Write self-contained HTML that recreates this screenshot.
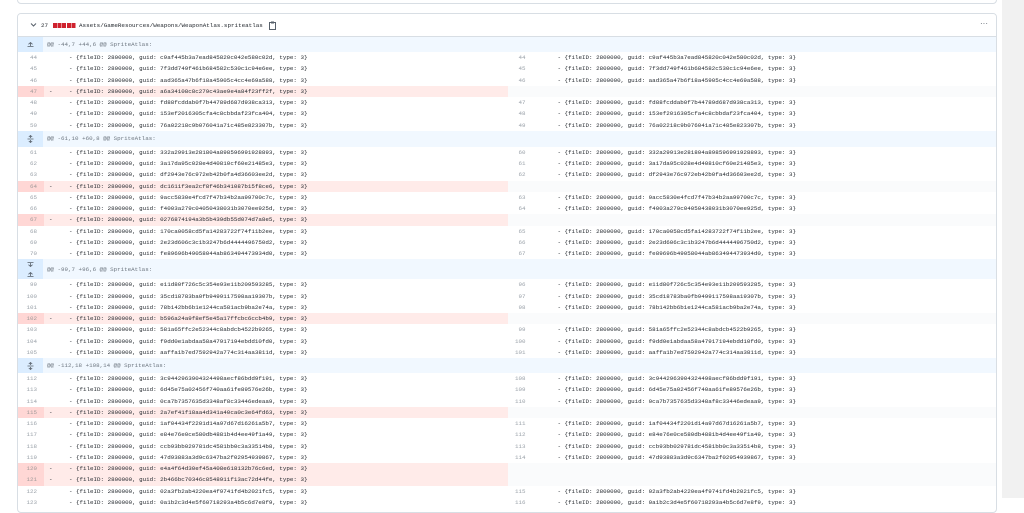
<!DOCTYPE html>
<html><head><meta charset="utf-8"><style>
*{margin:0;padding:0;box-sizing:border-box}
body{width:1024px;height:498px;overflow:hidden;background:#fff;font-family:"Liberation Mono",monospace;position:relative}
.strip{position:absolute;left:1002px;top:0;width:22px;height:498px;background:#f1f1f1}
.prev{position:absolute;left:17px;top:-10px;width:980px;height:14px;border:1px solid #d8dee4;border-radius:4px}
.box{position:absolute;left:17px;top:13px;width:980px;height:500px;border:1px solid #d8dee4;border-radius:4px;overflow:hidden}
.hd{height:23px;border-bottom:1px solid #d8dee4;background:#fff;position:relative;font-size:5.9px;color:#24292f}
.hd span{position:absolute;top:8px}
.row{display:flex;height:11.25px;font-size:5.85px;line-height:11.25px;color:#24292f;white-space:pre}
.half{display:flex;width:490px;position:relative}
.r{width:489px}
.n{width:26px;text-align:right;padding-right:7px;color:#9aa1a9}
.m{width:25px;padding-left:5px}
.del{background:#ffebe9}
.del .n{background:#ffd7d5;color:#a09a9a}
.emp{background:#fafbfc}
.hk{display:flex;background:#f1f8ff;font-size:5.85px;color:#6e7781;white-space:pre}
.hk .ic{width:25px;background:#dbedff;display:flex;align-items:center;justify-content:center;flex-direction:column}
.hk .t{padding-left:4px;display:flex;align-items:center}
</style></head><body>
<div class="strip"></div>
<div class="prev"></div>
<div class="box">
<div class="hd">
<svg style="position:absolute;left:12px;top:8px" width="7" height="6" viewBox="0 0 7 6"><path d="M1 1.5 L3.5 4 L6 1.5" stroke="#57606a" fill="none" stroke-width="1"/></svg>
<span style="left:23px">27</span>
<span style="left:35px;top:9px;width:23px;height:5px;background:repeating-linear-gradient(90deg,#cf222e 0 4px,#fff 4px 4.6px)"></span>
<span style="left:61px">Assets/GameResources/Weapons/WeaponAtlas.spriteatlas</span>
<svg style="position:absolute;left:251px;top:7px" width="7" height="9" viewBox="0 0 7 9"><rect x="0.5" y="1.5" width="6" height="7" fill="none" stroke="#57606a"/><rect x="2" y="0.5" width="3" height="2" fill="#57606a"/></svg>
<span style="left:962px;top:5px;font-size:8px;color:#57606a;font-family:'Liberation Sans',sans-serif">···</span>
</div>
<div id="c"></div>
</div>
<script>
var H=[
["@@ -44,7 +44,6 @@ SpriteAtlas:",15,"up",[[44,"c9af445b3a7ead845820c042e580c02d",44],[45,"7f3dd749f461b684582c530c1c94e6ee",45],[46,"aad365a47b6f18a45905c4cc4e69a588",46],[47,"a6a34108c8c279c43ae9e4a84f23ff2f",0],[48,"fd88fcddab0f7b44789d687d938ca313",47],[49,"153ef2016305cfa4c8cbbdaf23fca404",48],[50,"76a02218c9b076041a71c485e823307b",49]]],
["@@ -61,10 +60,8 @@ SpriteAtlas:",16,"both",[[61,"332a29913e281804a898596991928893",60],[62,"3a17da95c028e4d40810cf60e21485e3",61],[63,"df2943e76c972eb42b0fa4d36603ee2d",62],[64,"dc1611f3ea2cf8f46b341087b15f8ce6",0],[65,"9acc5830e4fcd7f47b34b2aa99700c7c",63],[66,"f4003a279c04050438031b3070ee925d",64],[67,"0276874194a3b5b439db55d074d7a8e5",0],[68,"170ca0058cd5fa14283722f74f11b2ee",65],[69,"2e23d606c3c1b3247b6d4444496750d2",66],[70,"fe89696b49058044ab863494473934d0",67]]],
["@@ -99,7 +96,6 @@ SpriteAtlas:",20,"two",[[99,"e11d80f726c5c354e93e11b209593285",96],[100,"35cd18783ba0fb9499117598aa19307b",97],[101,"78b142bb6b1e1244ca581acb9ba2e74a",98],[102,"b596a24a9f8ef5e45a17ffcbc6ccb4b9",0],[103,"581a65ffc2e52344c8abdcb4522b9265",99],[104,"f9dd0e1abdaa58a47917194ebdd10fd0",100],[105,"aaffa1b7ed7592942a774c314aa3811d",101]]],
["@@ -112,18 +108,14 @@ SpriteAtlas:",15,"both",[[112,"3c9442963904324498aecf86bdd9f191",108],[113,"6d45e75a02456f740aa61fe89576e26b",109],[114,"0ca7b7357635d3348af8c33446edeaa9",110],[115,"2a7ef41f18aa4d341a40ca0c3e64fd63",0],[116,"1af04434f2201d14a97d67d16261a5b7",111],[117,"e84e76e0ce580db4881b4d4ee49f1a49",112],[118,"ccb93bb029781dc4581bb0c3a33514b8",113],[119,"47d93883a3d9c6347ba2f02954939867",114],[120,"e4a4f64d30ef45a408e618132b76c6ed",0],[121,"2b466bc70346c8548911f13ac72d44fe",0],[122,"02a3fb2ab4220ea4f9741fd4b2021fc5",115],[123,"0a1b2c3d4e5f60718293a4b5c6d7e8f9",116]]]];
var up='<svg width="7" height="5" viewBox="0 0 7 5"><path d="M3.5 0.5V4M1.5 2.3L3.5 0.5 5.5 2.3M0.5 4.5H6.5" stroke="#57606a" fill="none" stroke-width="0.8"/></svg>';
var dn='<svg width="7" height="5" viewBox="0 0 7 5"><path d="M0.5 0.5H6.5M3.5 1V4.5M1.5 2.7L3.5 4.5 5.5 2.7" stroke="#57606a" fill="none" stroke-width="0.8"/></svg>';
var both='<svg width="7" height="8" viewBox="0 0 7 8"><path d="M3.5 0.5V3M1.8 2L3.5 0.5 5.2 2M0.5 4H6.5M3.5 5V7.5M1.8 6L3.5 7.5 5.2 6" stroke="#57606a" fill="none" stroke-width="0.8"/></svg>';
var h='';
H.forEach(function(k){
 var ic=k[2]=="up"?up:k[2]=="two"?dn+'<div style="height:5px"></div>'+up:both;
 h+='<div class="hk" style="height:'+k[1]+'px"><div class="ic">'+ic+'</div><div class="t">'+k[0]+'</div></div>';
 k[3].forEach(function(r){
  var code='- {fileID: 2800000, guid: '+r[1]+', type: 3}';
  if(r[2]){
   h+='<div class="row"><div class="half"><div class="n">'+r[0]+'</div><div class="m"></div><div>'+code+'</div></div><div class="half r" style="border-left:0"><div class="n" style="width:25px">'+r[2]+'</div><div class="m"></div><div>'+code+'</div></div></div>';
  }else{
   h+='<div class="row"><div class="half del"><div class="n">'+r[0]+'</div><div class="m">-</div><div>'+code+'</div></div><div class="half r emp"></div></div>';
  }
 });
});
document.getElementById('c').innerHTML=h;
</script>
</body></html>
